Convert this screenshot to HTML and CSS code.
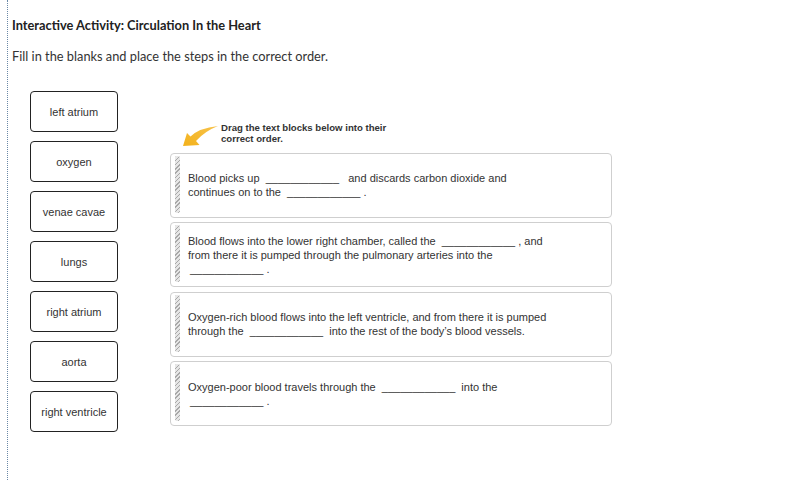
FILE: index.html
```html
<!DOCTYPE html>
<html>
<head>
<meta charset="utf-8">
<link rel="stylesheet" href="styles.css">
</head>
<body>
<div class="page">
  <h1 class="title">Interactive Activity: Circulation In the Heart</h1>
  <p class="subtitle">Fill in the blanks and place the steps in the correct order.</p>
  <div class="activity">
    <div class="bank">
      <div class="chip">left atrium</div>
      <div class="chip">oxygen</div>
      <div class="chip">venae cavae</div>
      <div class="chip">lungs</div>
      <div class="chip">right atrium</div>
      <div class="chip">aorta</div>
      <div class="chip">right ventricle</div>
    </div>
    <div class="order">
      <div class="hint">
        <svg class="arrow" width="40" height="28" viewBox="0 0 40 28">
          <defs>
            <linearGradient id="ag" x1="0" y1="1" x2="1" y2="0">
              <stop offset="0" stop-color="#f3b21c"/>
              <stop offset="1" stop-color="#f7c24a"/>
            </linearGradient>
          </defs>
          <path d="M3,26 L7,13 L10.5,16.5 Q19,8 38,6 Q25,11 16,21 L19.5,25 Z" fill="url(#ag)"/>
        </svg>
        <div class="hint-text">Drag the text blocks below into their<br>correct order.</div>
      </div>
      <div class="card"><span class="grip"></span><div class="card-text">Blood picks up&nbsp; ____________ &nbsp;&nbsp;and discards carbon dioxide and continues on to the&nbsp; ____________ .</div></div>
      <div class="card"><span class="grip"></span><div class="card-text">Blood flows into the lower right chamber, called the&nbsp; ____________ , and from there it is pumped through the pulmonary arteries into the <span class="lead">____________ .</span></div></div>
      <div class="card"><span class="grip"></span><div class="card-text">Oxygen-rich blood flows into the left ventricle, and from there it is pumped through the&nbsp; ____________&nbsp; into the rest of the body’s blood vessels.</div></div>
      <div class="card"><span class="grip"></span><div class="card-text">Oxygen-poor blood travels through the&nbsp; ____________&nbsp; into the <span class="lead">____________ .</span></div></div>
    </div>
  </div>
</div>
</body>
</html>
```
FILE: styles.css
```css
html, body {
  margin: 0;
  padding: 0;
  background: #fff;
}

.page {
  margin-left: 7px;
  border-left: 1px dotted #6a88a6;
  min-height: 480px;
  box-sizing: border-box;
  padding: 18px 0 0 4px;
  font-family: "Liberation Sans", Arial, sans-serif;
  color: #333;
}

.title {
  margin: 0;
  font-family: Lato, "Liberation Sans", sans-serif;
  font-weight: 700;
  font-size: 12.8px;
  line-height: 14px;
  color: #222;
}

.subtitle {
  margin: 17px 0 0;
  font-family: Lato, "Liberation Sans", sans-serif;
  font-size: 12.8px;
  line-height: 14px;
  color: #333;
}

.activity {
  display: flex;
  margin-top: 28px;
  padding-left: 18px;
}

.bank {
  display: flex;
  flex-direction: column;
  gap: 9px;
  width: 88px;
}

.chip {
  height: 41px;
  box-sizing: border-box;
  border: 1px solid #222;
  border-radius: 4px;
  display: flex;
  align-items: center;
  justify-content: center;
  font-size: 11px;
  color: #333;
}

.order {
  margin-left: 52px;
  margin-top: 29px;
  width: 442px;
}

.hint {
  display: flex;
  align-items: flex-start;
  padding-left: 10px;
  height: 28px;
}

.arrow {
  display: block;
  flex: none;
}

.hint-text {
  margin-left: 1px;
  margin-top: 2px;
  font-size: 9.6px;
  line-height: 11px;
  font-weight: 700;
  color: #333;
}

.card {
  margin-top: 4.5px;
  height: 65px;
  box-sizing: border-box;
  border: 1px solid #cfcfcf;
  border-radius: 4px;
  display: flex;
  align-items: center;
}

.grip {
  align-self: stretch;
  width: 5px;
  margin: 2px 0 4px 4px;
  border-radius: 2px;
  background:
    repeating-linear-gradient(135deg, #a8a8a8 0 1px, #e6e6e6 1px 3px),
    #d0d0d0;
  flex: none;
}

.card-text {
  margin-left: 8px;
  width: 368px;
  font-size: 11px;
  line-height: 14px;
  color: #333;
}

.lead {
  padding-left: 2px;
}
```
